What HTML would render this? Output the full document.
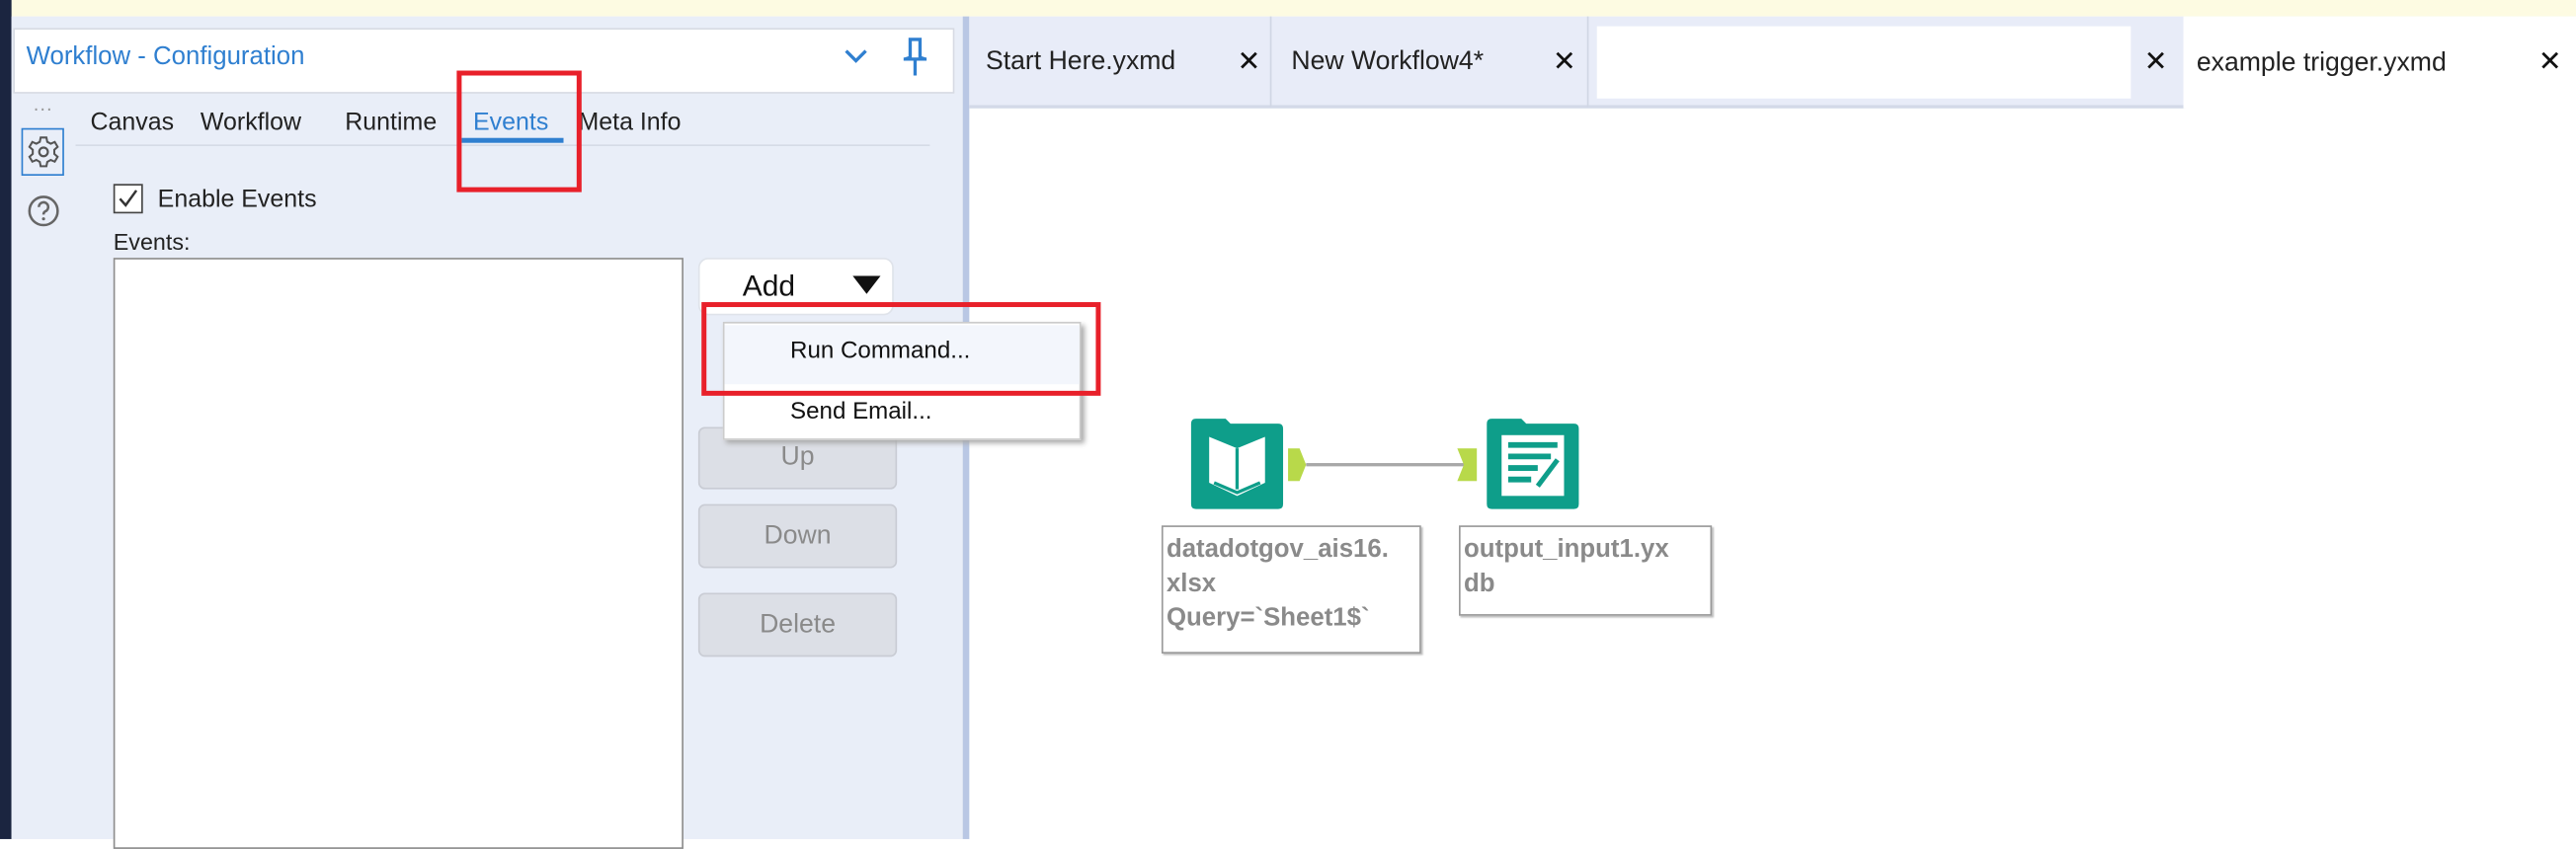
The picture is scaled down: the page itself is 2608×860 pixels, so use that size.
<!DOCTYPE html>
<html><head><meta charset="utf-8"><style>
html,body{margin:0;padding:0;width:2608px;height:849px;overflow:hidden;background:#fff}
#w{position:absolute;left:0;top:0;width:1568px;height:511px;transform:scale(1.6633);transform-origin:0 0;font-family:"Liberation Sans",sans-serif;background:#fff}
.a{position:absolute}
.t{position:absolute;white-space:nowrap;font-size:15px;color:#222;line-height:1}
.btn{position:absolute;left:425px;width:119px;border:1px solid #c9ccd4;border-radius:4px;background:#dcdfe6;color:#8a8a8a;font-size:16px;text-align:center}
.x{position:absolute;font-size:17px;color:#111;line-height:1}
.lbl{position:absolute;border:1px solid #9a9a9a;box-shadow:1px 1px 1px #bbb;background:#fff;color:#8a8a8a;font-weight:bold;font-size:15.5px;line-height:21px;padding:3px 2px 0 2px;box-sizing:border-box;white-space:nowrap;overflow:hidden}
</style></head><body><div id="w">
<div class="a" style="left:0;top:0;width:1568px;height:10px;background:#fdfbe2"></div>
<div class="a" style="left:0;top:0;width:7px;height:511px;background:#1b2540"></div>
<div class="a" style="left:7px;top:10px;width:579px;height:501px;background:#e9eef8"></div>
<div class="a" style="left:8px;top:17px;width:573px;height:40px;background:#fff;border:1px solid #d6dae3;box-sizing:border-box"></div>
<div class="t" style="left:16px;top:27px;font-size:15.5px;color:#2f7fd0">Workflow - Configuration</div>
<svg class="a" style="left:513px;top:27px" width="16" height="14" viewBox="0 0 16 14"><path d="M2 4l6 6 6-6" fill="none" stroke="#2f7fd0" stroke-width="2"/></svg>
<svg class="a" style="left:547px;top:22px" width="20" height="26" viewBox="0 0 20 26"><path d="M6 2h8M7 2v11M13 2v11M3 14h14M10 14v10M7 13l-3 1M13 13l3 1" fill="none" stroke="#2f7fd0" stroke-width="2"/></svg>
<div class="a" style="left:586px;top:10px;width:4px;height:501px;background:#b9c7e4"></div>
<div class="t" style="left:20px;top:60px;font-size:12px;color:#999">···</div>
<div class="a" style="left:13px;top:78px;width:26px;height:29px;border:1px solid #2f7fd0;box-sizing:border-box"></div>
<svg class="a" style="left:16px;top:82px" width="21" height="21" viewBox="0 0 24 24"><circle cx="12" cy="12" r="3" fill="none" stroke="#555" stroke-width="1.5"/><path d="M10 2h4l.6 3 2.4 1.3 2.8-1.2 2 3.4-2.3 2v2.9l2.3 2-2 3.4-2.8-1.2L14.6 19l-.6 3h-4l-.6-3L7 17.6l-2.8 1.2-2-3.4 2.3-2v-2.9l-2.3-2 2-3.4L7 6.3 9.4 5z" fill="none" stroke="#555" stroke-width="1.4"/></svg>
<svg class="a" style="left:16px;top:118px" width="21" height="21" viewBox="0 0 22 22"><circle cx="11" cy="11" r="9" fill="none" stroke="#666" stroke-width="1.6"/><path d="M8 8.5a3 3 0 1 1 4 2.8c-.8.4-1 1-1 2" fill="none" stroke="#666" stroke-width="1.6"/><circle cx="11" cy="16" r="1" fill="#666"/></svg>
<div class="t" style="left:55px;top:67px">Canvas</div>
<div class="t" style="left:122px;top:67px">Workflow</div>
<div class="t" style="left:210px;top:67px">Runtime</div>
<div class="t" style="left:288px;top:67px;color:#2f7fd0">Events</div>
<div class="t" style="left:352px;top:67px">Meta Info</div>
<div class="a" style="left:46px;top:88px;width:520px;height:1px;background:#d5dbe6"></div>
<div class="a" style="left:281px;top:84px;width:62px;height:3px;background:#2f7fd0"></div>
<div class="a" style="left:278px;top:43px;width:76px;height:74px;border:3px solid #e8202a;box-sizing:border-box"></div>
<div class="a" style="left:69px;top:112px;width:18px;height:18px;border:1px solid #444;background:#fff;box-sizing:border-box"></div>
<svg class="a" style="left:71px;top:114px" width="14" height="14" viewBox="0 0 14 14"><path d="M2 7l3.5 4L12 2" fill="none" stroke="#333" stroke-width="1.5"/></svg>
<div class="t" style="left:96px;top:114px">Enable Events</div>
<div class="t" style="left:69px;top:140px;font-size:14px">Events:</div>
<div class="a" style="left:69px;top:157px;width:347px;height:360px;border:1px solid #8d8d8d;background:#fff;box-sizing:border-box"></div>
<div class="a" style="left:425px;top:157px;width:119px;height:35px;border:1px solid #dfe3ea;border-radius:6px;background:#fff;box-sizing:border-box"></div>
<div class="t" style="left:452px;top:165px;font-size:18px;color:#111">Add</div>
<svg class="a" style="left:519px;top:168px" width="17" height="12" viewBox="0 0 17 12"><path d="M0 0h17L8.5 11z" fill="#111"/></svg>
<div class="btn" style="top:260px;height:36px;line-height:36px">Up</div>
<div class="btn" style="top:307px;height:37px;line-height:37px">Down</div>
<div class="btn" style="top:361px;height:37px;line-height:37px">Delete</div>
<div class="a" style="left:440px;top:196px;width:218px;height:72px;background:#fff;border:1px solid #ccc;box-shadow:2px 2px 3px #aaa;box-sizing:border-box"></div>
<div class="a" style="left:441px;top:198px;width:216px;height:36px;background:#f3f6fc"></div>
<div class="t" style="left:481px;top:207px;font-size:14.5px;color:#111">Run Command...</div>
<div class="t" style="left:481px;top:244px;font-size:14.5px;color:#111">Send Email...</div>
<div class="a" style="left:427px;top:184px;width:243px;height:57px;border:3px solid #e8202a;box-sizing:border-box"></div>
<div class="a" style="left:590px;top:10px;width:978px;height:55px;background:#e8ecf8"></div>
<div class="a" style="left:590px;top:64px;width:740px;height:2px;background:#d3d9e8"></div>
<div class="t" style="left:600px;top:30px;font-size:16px">Start Here.yxmd</div><div class="x" style="left:753px;top:29px">✕</div>
<div class="a" style="left:773px;top:10px;width:1px;height:55px;background:#d0d6e4"></div>
<div class="t" style="left:786px;top:30px;font-size:16px">New Workflow4*</div><div class="x" style="left:945px;top:29px">✕</div>
<div class="a" style="left:966px;top:10px;width:1px;height:55px;background:#d0d6e4"></div>
<div class="a" style="left:972px;top:16px;width:325px;height:44px;background:#fff"></div>
<div class="x" style="left:1305px;top:29px">✕</div>
<div class="a" style="left:1329px;top:10px;width:239px;height:56px;background:#fff"></div>
<div class="t" style="left:1337px;top:31px;font-size:16px">example trigger.yxmd</div><div class="x" style="left:1545px;top:29px">✕</div>
<svg class="a" style="left:722px;top:252px" width="62" height="62" viewBox="0 0 62 62"><path d="M3 6q0-3 3-3h18l3 3h29q3 0 3 3v46q0 3-3 3H6q-3 0-3-3z" fill="#0e9e8a"/><path d="M14 14l17 7 17-7v28l-17 8-17-8z" fill="#fff"/><path d="M31 21v25M17 42l14 6 14-6" fill="none" stroke="#0e9e8a" stroke-width="2"/></svg>
<svg class="a" style="left:784px;top:273px" width="12" height="20" viewBox="0 0 12 20"><path d="M0 0h7l4 10-4 10H0z" fill="#b8d94a"/></svg>
<div class="a" style="left:795px;top:282px;width:96px;height:2px;background:#a8a8a8"></div>
<svg class="a" style="left:887px;top:273px" width="12" height="20" viewBox="0 0 12 20"><path d="M0 0h12v20H0l4-10z" fill="#b8d94a"/></svg>
<svg class="a" style="left:902px;top:252px" width="62" height="62" viewBox="0 0 62 62"><path d="M3 6q0-3 3-3h18l3 3h29q3 0 3 3v46q0 3-3 3H6q-3 0-3-3z" fill="#0e9e8a"/><rect x="12" y="13" width="38" height="37" fill="#fff"/><path d="M16 19h30M16 26h26M16 33h18M16 40h14" stroke="#0e9e8a" stroke-width="3.5"/><path d="M34 44l12-16" stroke="#0e9e8a" stroke-width="3"/></svg>
<div class="lbl" style="left:707px;top:320px;width:158px;height:78px">datadotgov_ais16.<br>xlsx<br>Query=`Sheet1$`</div>
<div class="lbl" style="left:888px;top:320px;width:154px;height:55px">output_input1.yx<br>db</div>
</div></body></html>
